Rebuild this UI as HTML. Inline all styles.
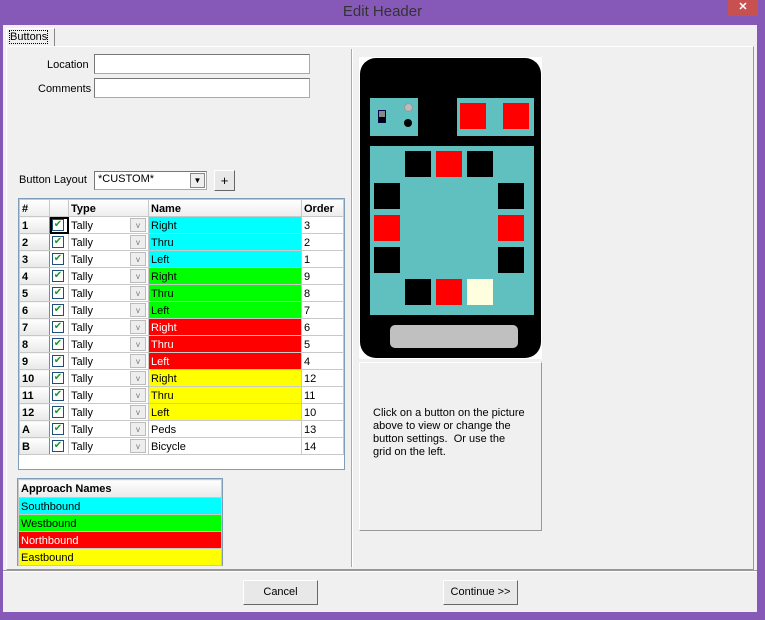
<!DOCTYPE html>
<html><head><style>
*{box-sizing:border-box}
body{margin:0;width:765px;height:620px;background:#8659b8;font-family:"Liberation Sans",sans-serif;font-size:11px;position:relative;overflow:hidden;color:#000}
.a{position:absolute}
.title{left:0;top:0;width:765px;height:25px;text-align:center;line-height:23px;font-size:15px;color:#333}
.client{left:3px;top:25px;width:754px;height:587px;background:#f0f0f0}
.inp{background:#fff;border:1px solid #aaa;border-top-color:#777;border-left-color:#777}
table{border-collapse:collapse;font-size:11px}
td{border:1px solid #c8c8c8;height:17px;padding:2px 2px 0;white-space:nowrap;line-height:14px;vertical-align:top}
.grid td.n{font-weight:bold;background:linear-gradient(#fff,#e8e8e8);border-right:1px solid #888}
.cb{display:inline-block;width:12px;height:12px;border:1px solid #1f4e79;background:#fff;color:#1a9a2a;font-size:10px;line-height:10px;text-align:center;vertical-align:top;margin-top:0}
.dd{float:right;width:16px;height:14px;border:1px solid #bbb;background:#eee;color:#777;font-size:8px;text-align:center;line-height:13px;margin-top:-1px}
.btn{background:#e8e8e8;border:1px solid #fff;border-right-color:#666;border-bottom-color:#666;text-align:center;font-size:11px}
.sq{position:absolute;width:26px;height:26px;background:#000}
.r{background:#f00}
</style></head><body>
<div class="a title">Edit Header</div>
<div class="a" style="left:728px;top:0;width:30px;height:16px;background:#c75050;color:#fff;text-align:center;font-weight:bold;font-size:11px;line-height:15px">✕</div>
<div class="a client"></div>
<div class="a" style="left:6px;top:28px;width:49px;height:18px;background:#f0f0f0;border:1px solid #fff;border-right-color:#888;border-bottom:none;padding:2px 3px"><span style="outline:1px dotted #000">Buttons</span></div>
<div class="a" style="left:6px;top:46px;width:748px;height:524px;border:1px solid #fff;border-right-color:#999;border-bottom-color:#999"></div>
<div class="a" style="left:351px;top:49px;width:2px;height:518px;border-left:1px solid #aaa;border-right:1px solid #fff"></div>
<div class="a" style="left:3px;top:570px;width:754px;height:2px;border-top:1px solid #999;border-bottom:1px solid #fff"></div>

<div class="a" style="left:47px;top:59px">Location</div>
<div class="a inp" style="left:94px;top:54px;width:216px;height:20px"></div>
<div class="a" style="left:38px;top:83px">Comments</div>
<div class="a inp" style="left:94px;top:78px;width:216px;height:20px"></div>
<div class="a" style="left:19px;top:174px">Button Layout</div>
<div class="a inp" style="left:94px;top:171px;width:113px;height:19px;padding:1px 3px">*CUSTOM*<div class="a" style="right:1px;top:1px;width:15px;height:15px;border:1px solid #888;background:#eee;font-size:8px;text-align:center;line-height:14px">▼</div></div>
<div class="a btn" style="left:214px;top:170px;width:21px;height:21px;line-height:19px;font-size:13px">+</div>

<div class="a" style="left:18px;top:198px;width:327px;height:272px;background:#fff;border:1px solid #7f9db9">
<table class="grid" style="width:324px;table-layout:fixed">
<col style="width:30px"><col style="width:19px"><col style="width:80px"><col style="width:153px"><col style="width:42px">
<tr style="font-weight:bold;background:linear-gradient(#fff,#ececec)"><td>#</td><td></td><td>Type</td><td>Name</td><td>Order</td></tr>
<tr><td class="n">1</td><td style="outline:2px solid #000;outline-offset:-2px"><span class="cb">✔</span></td><td>Tally<span class="dd">v</span></td><td style="background:#0ff">Right</td><td>3</td></tr>
<tr><td class="n">2</td><td><span class="cb">✔</span></td><td>Tally<span class="dd">v</span></td><td style="background:#0ff">Thru</td><td>2</td></tr>
<tr><td class="n">3</td><td><span class="cb">✔</span></td><td>Tally<span class="dd">v</span></td><td style="background:#0ff">Left</td><td>1</td></tr>
<tr><td class="n">4</td><td><span class="cb">✔</span></td><td>Tally<span class="dd">v</span></td><td style="background:#0f0">Right</td><td>9</td></tr>
<tr><td class="n">5</td><td><span class="cb">✔</span></td><td>Tally<span class="dd">v</span></td><td style="background:#0f0">Thru</td><td>8</td></tr>
<tr><td class="n">6</td><td><span class="cb">✔</span></td><td>Tally<span class="dd">v</span></td><td style="background:#0f0">Left</td><td>7</td></tr>
<tr><td class="n">7</td><td><span class="cb">✔</span></td><td>Tally<span class="dd">v</span></td><td style="background:#f00;color:#fff">Right</td><td>6</td></tr>
<tr><td class="n">8</td><td><span class="cb">✔</span></td><td>Tally<span class="dd">v</span></td><td style="background:#f00;color:#fff">Thru</td><td>5</td></tr>
<tr><td class="n">9</td><td><span class="cb">✔</span></td><td>Tally<span class="dd">v</span></td><td style="background:#f00;color:#fff">Left</td><td>4</td></tr>
<tr><td class="n">10</td><td><span class="cb">✔</span></td><td>Tally<span class="dd">v</span></td><td style="background:#ff0">Right</td><td>12</td></tr>
<tr><td class="n">11</td><td><span class="cb">✔</span></td><td>Tally<span class="dd">v</span></td><td style="background:#ff0">Thru</td><td>11</td></tr>
<tr><td class="n">12</td><td><span class="cb">✔</span></td><td>Tally<span class="dd">v</span></td><td style="background:#ff0">Left</td><td>10</td></tr>
<tr><td class="n">A</td><td><span class="cb">✔</span></td><td>Tally<span class="dd">v</span></td><td>Peds</td><td>13</td></tr>
<tr><td class="n">B</td><td><span class="cb">✔</span></td><td>Tally<span class="dd">v</span></td><td>Bicycle</td><td>14</td></tr>
</table></div>

<div class="a" style="left:17px;top:478px;width:206px;height:88px;border:1px solid #7f9db9;background:#fff">
<table style="width:204px">
<tr><td style="font-weight:bold;background:linear-gradient(#fff,#e8e8e8);height:18px">Approach Names</td></tr>
<tr><td style="background:#0ff">Southbound</td></tr>
<tr><td style="background:#0f0">Westbound</td></tr>
<tr><td style="background:#f00;color:#fff">Northbound</td></tr>
<tr><td style="background:#ff0">Eastbound</td></tr>
</table></div>

<div class="a" style="left:359px;top:57px;width:183px;height:302px;background:#fff"></div>
<div class="a" style="left:360px;top:58px;width:181px;height:300px;background:#000;border-radius:16px"></div>
<div class="a" style="left:370px;top:98px;width:48px;height:38px;background:#60c0c0"></div>
<div class="a" style="left:378px;top:110px;width:8px;height:13px;background:#888;border:1px solid #004"><div style="position:absolute;left:0;top:6px;width:6px;height:5px;background:#000"></div></div>
<div class="a" style="left:404px;top:103px;width:9px;height:9px;border-radius:50%;background:#bbb;border:1px solid #999"></div>
<div class="a" style="left:404px;top:119px;width:8px;height:8px;border-radius:50%;background:#000"></div>
<div class="a" style="left:457px;top:98px;width:77px;height:38px;background:#60c0c0"></div>
<div class="sq r" style="left:460px;top:103px"></div><div class="sq r" style="left:503px;top:103px"></div>
<div class="a" style="left:370px;top:146px;width:164px;height:169px;background:#60c0c0"></div>
<div class="sq" style="left:405px;top:151px"></div><div class="sq r" style="left:436px;top:151px"></div><div class="sq" style="left:467px;top:151px"></div>
<div class="sq" style="left:374px;top:183px"></div><div class="sq" style="left:498px;top:183px"></div>
<div class="sq r" style="left:374px;top:215px"></div><div class="sq r" style="left:498px;top:215px"></div>
<div class="sq" style="left:374px;top:247px"></div><div class="sq" style="left:498px;top:247px"></div>
<div class="sq" style="left:405px;top:279px"></div><div class="sq r" style="left:436px;top:279px"></div><div class="sq" style="left:467px;top:279px;background:#ffffe0"></div>
<div class="a" style="left:390px;top:325px;width:128px;height:23px;background:#c0c0c0;border-radius:5px"></div>

<div class="a" style="left:359px;top:362px;width:183px;height:169px;border:1px solid #fff;border-right-color:#999;border-bottom-color:#999"></div>
<div class="a" style="left:373px;top:407px;line-height:13px;white-space:nowrap">Click on a button on the picture<br>above to view or change the<br>button settings.&nbsp; Or use the<br>grid on the left.</div>

<div class="a btn" style="left:243px;top:580px;width:75px;height:25px;line-height:23px">Cancel</div>
<div class="a btn" style="left:443px;top:580px;width:75px;height:25px;line-height:23px">Continue &gt;&gt;</div>
</body></html>
